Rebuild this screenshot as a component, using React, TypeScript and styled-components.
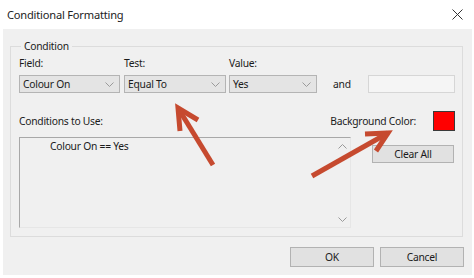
import React from "react";
import styled, { createGlobalStyle } from "styled-components";

const Global = createGlobalStyle`
  html, body { margin: 0; padding: 0; background: #fff; }
  body { font-family: "Noto Sans", "Open Sans", sans-serif; }
`;

const Window = styled.div`
  position: relative;
  width: 474px;
  height: 278px;
  background: #ffffff;
  display: flex;
  flex-direction: column;
  overflow: hidden;
  color: #1b1b1b;
  font-size: 10.3px;
  letter-spacing: -0.25px;
`;

const TitleBar = styled.div`
  height: 29px;
  display: flex;
  align-items: center;
  justify-content: space-between;
  padding: 0 11px 0 7px;
  font-size: 11.1px;
  letter-spacing: -0.2px;
  color: #222;
`;

const Body = styled.div`
  margin: 0 2px 3px 3px;
  flex: 1;
  background: #f0f0f0;
  display: flex;
  flex-direction: column;
  padding: 10px 0 0 7px;
`;

const Group = styled.fieldset`
  margin: 0;
  width: 453px;
  height: 198px;
  box-sizing: border-box;
  border: 1px solid #dcdcdc;
  padding: 4px 7px 0 8px;
  display: flex;
  flex-direction: column;
`;

const Legend = styled.legend`
  padding: 0 3px;
  margin-left: 2px;
`;

const Row = styled.div`
  display: flex;
  align-items: flex-end;
`;

const Col = styled.div<{ $w: number; $gap?: number }>`
  width: ${(p) => p.$w}px;
  margin-right: ${(p) => p.$gap ?? 0}px;
  display: flex;
  flex-direction: column;
  gap: 5px;
`;

const Label = styled.span`
  line-height: 13px;
  white-space: nowrap;
`;

const Select = styled.div`
  height: 18px;
  box-sizing: border-box;
  border: 1px solid #b4b4b4;
  background: #e4e4e4;
  display: flex;
  align-items: center;
  justify-content: space-between;
  padding: 0 5px 0 3px;
`;

const TextBox = styled.div`
  width: 87px;
  height: 18px;
  box-sizing: border-box;
  border: 1px solid #d6d6d6;
  background: #f5f5f5;
`;

const AndLabel = styled.span`
  width: 35px;
  line-height: 18px;
  margin-left: 16px;
`;

const Row2 = styled.div`
  display: flex;
  align-items: center;
  margin-top: 18px;
  height: 20px;
`;

const Spacer = styled.div`
  flex: 1;
`;

const Swatch = styled.div`
  width: 22px;
  height: 20px;
  box-sizing: border-box;
  border: 1px solid #3a3a3a;
  background: #ff0000;
  margin-left: 17px;
`;

const Row3 = styled.div`
  display: flex;
  align-items: flex-start;
  margin-top: 6px;
`;

const ListBox = styled.div`
  width: 332px;
  height: 91px;
  box-sizing: border-box;
  border-top: 1px solid #a8a8a8;
  border-left: 1px solid #a8a8a8;
  border-right: 1px solid #e6e6e6;
  border-bottom: 1px solid #e6e6e6;
  display: flex;
`;

const ListContent = styled.div`
  flex: 1;
  padding: 1px 0 0 30px;
`;

const ScrollBar = styled.div`
  width: 16px;
  display: flex;
  flex-direction: column;
  justify-content: space-between;
  align-items: center;
  padding: 6px 0 5px;
`;

const Button = styled.div<{ $w: number }>`
  width: ${(p) => p.$w}px;
  height: 20px;
  box-sizing: border-box;
  border: 1px solid #b2b2b2;
  background: #e1e1e1;
  display: flex;
  align-items: center;
  justify-content: center;
`;

const ClearButton = styled(Button)`
  margin: 8px 0 0 21px;
  height: 18px;
`;

const Footer = styled.div`
  display: flex;
  justify-content: flex-end;
  gap: 6px;
  padding: 10px 8px 0 0;
`;

const Overlay = styled.svg`
  position: absolute;
  left: 0;
  top: 0;
  pointer-events: none;
`;

const Chevron = ({ up }: { up?: boolean }) => (
  <svg width="9" height="5" viewBox="0 0 9 5">
    <polyline
      points={up ? "0.5,4.5 4.5,0.5 8.5,4.5" : "0.5,0.5 4.5,4.5 8.5,0.5"}
      fill="none"
      stroke="#9a9a9a"
      strokeWidth="1"
    />
  </svg>
);

const Dropdown = ({ text }: { text: string }) => (
  <Select>
    <span>{text}</span>
    <Chevron />
  </Select>
);

export default function App() {
  return (
    <>
      <Global />
      <Window>
        <TitleBar>
          <span>Conditional Formatting</span>
          <svg width="11" height="11" viewBox="0 0 11 11">
            <path d="M0.5 0.5 L10.5 10.5 M10.5 0.5 L0.5 10.5" stroke="#333" strokeWidth="1" />
          </svg>
        </TitleBar>
        <Body>
          <Group>
            <Legend>Condition</Legend>
            <Row>
              <Col $w={101} $gap={4}>
                <Label>Field:</Label>
                <Dropdown text="Colour On" />
              </Col>
              <Col $w={102} $gap={3}>
                <Label>Test:</Label>
                <Dropdown text="Equal To" />
              </Col>
              <Col $w={88}>
                <Label>Value:</Label>
                <Dropdown text="Yes" />
              </Col>
              <AndLabel>and</AndLabel>
              <TextBox />
            </Row>
            <Row2>
              <Label>Conditions to Use:</Label>
              <Spacer />
              <Label>Background Color:</Label>
              <Swatch />
            </Row2>
            <Row3>
              <ListBox>
                <ListContent>Colour On == Yes</ListContent>
                <ScrollBar>
                  <Chevron up />
                  <Chevron />
                </ScrollBar>
              </ListBox>
              <ClearButton $w={82}>Clear All</ClearButton>
            </Row3>
          </Group>
          <Footer>
            <Button $w={84}>OK</Button>
            <Button $w={84}>Cancel</Button>
          </Footer>
        </Body>
        <Overlay width="474" height="278" viewBox="0 0 474 278">
          <g stroke="#c64a2f" strokeWidth="5" fill="none" strokeLinecap="butt" strokeLinejoin="miter">
            <line x1="213" y1="165" x2="178" y2="108" />
            <polyline points="180,131 178,108 198,120" />
            <line x1="312" y1="176" x2="388" y2="133" />
            <polyline points="365,134 388,133 376,151" />
          </g>
        </Overlay>
      </Window>
    </>
  );
}
